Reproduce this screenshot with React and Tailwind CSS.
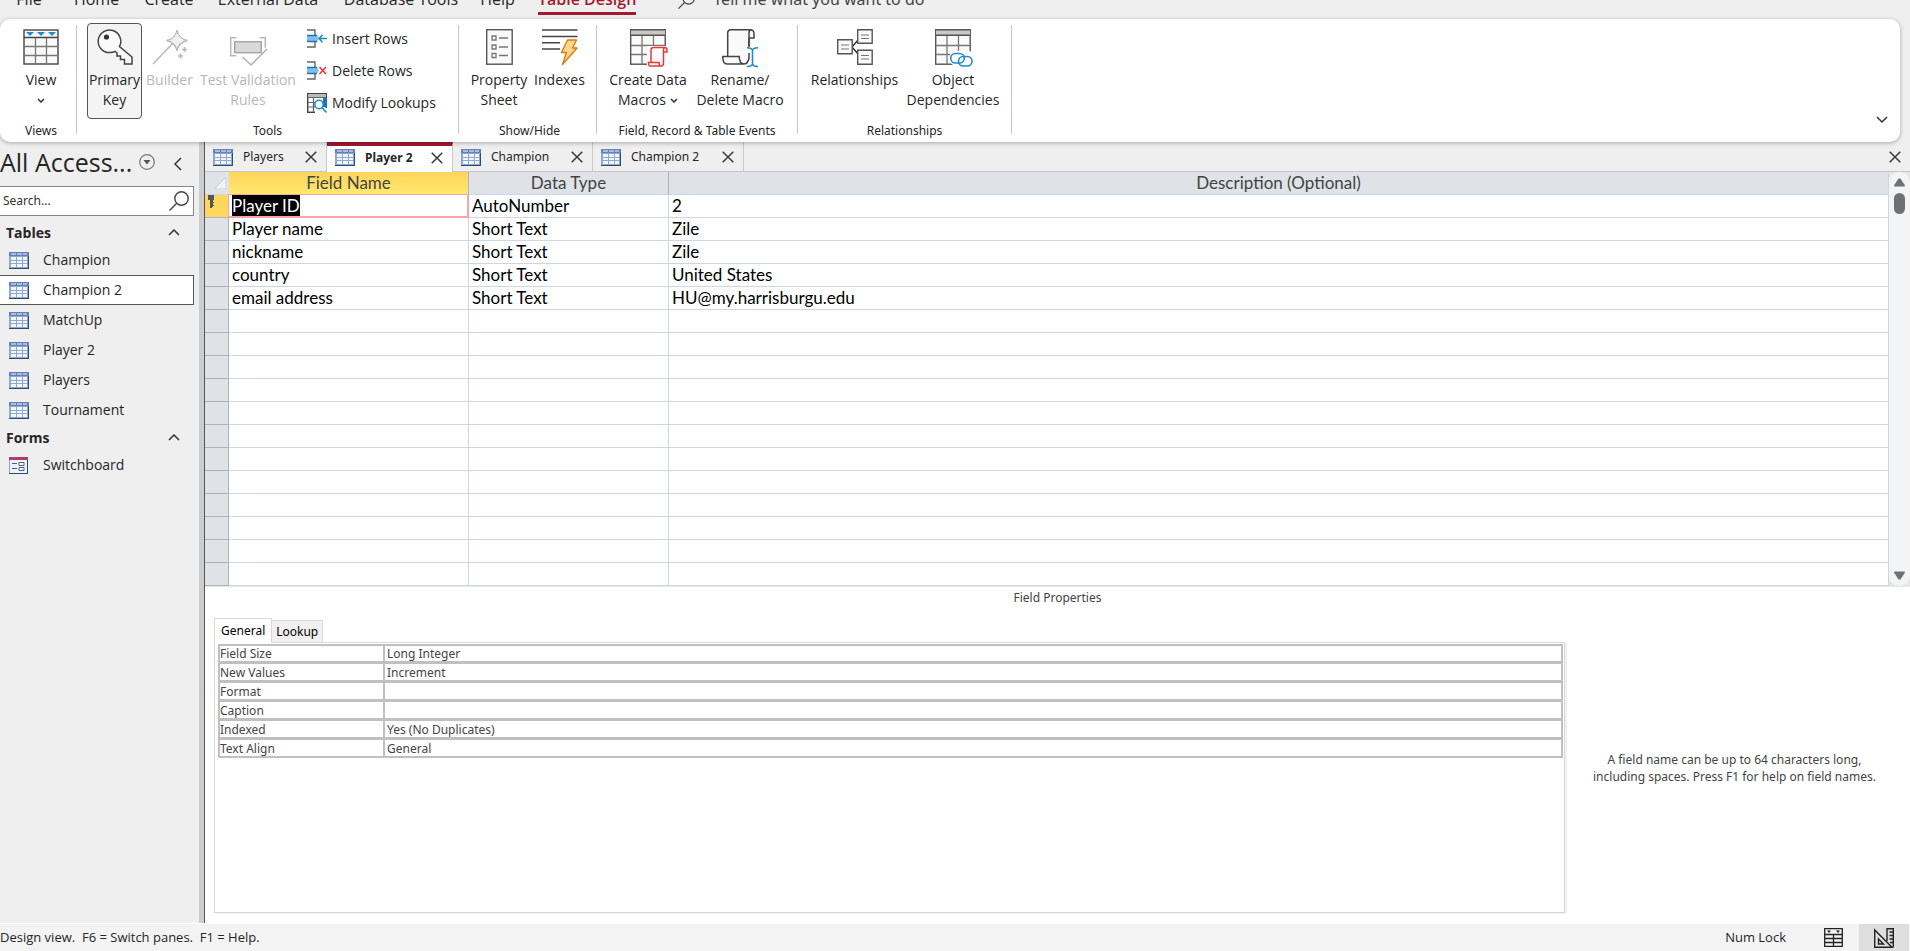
const menuItems = [
  { label: 'File', className: 'w-[58px]' },
  { label: 'Home', className: 'w-[77px]' },
  { label: 'Create', className: 'w-[68px]' },
  { label: 'External Data', className: 'w-[130px]' },
  { label: 'Database Tools', className: 'w-[136px]' },
  { label: 'Help', className: 'w-[57px]' },
]

const tables = ['Champion', 'Champion 2', 'MatchUp', 'Player 2', 'Players', 'Tournament']

const documentTabs = [
  { name: 'Players', className: 'w-[122px]' },
  { name: 'Player 2', className: 'w-[126px]' },
  { name: 'Champion', className: 'w-[140px]' },
  { name: 'Champion 2', className: 'w-[151px]' },
]

const fields = [
  ['Player ID', 'AutoNumber', '2'],
  ['Player name', 'Short Text', 'Zile'],
  ['nickname', 'Short Text', 'Zile'],
  ['country', 'Short Text', 'United States'],
  ['email address', 'Short Text', 'HU@my.harrisburgu.edu'],
]

const emptyRows = 12

const properties = [
  ['Field Size', 'Long Integer'],
  ['New Values', 'Increment'],
  ['Format', ''],
  ['Caption', ''],
  ['Indexed', 'Yes (No Duplicates)'],
  ['Text Align', 'General'],
]

function Svg({ size = 36, children }) {
  return (
    <svg width={size} height={size} viewBox={`0 0 ${size} ${size}`} fill="none" className="block shrink-0 overflow-visible" aria-hidden="true">
      {children}
    </svg>
  )
}

function ViewIcon() {
  return (
    <Svg>
      <rect x="1" y="1" width="34" height="34" fill="#fafafa" stroke="#444" strokeWidth="1.4" />
      <path d="M1 8.5h34" stroke="#444" strokeWidth="1.4" />
      <path d="M1 17.5h34M1 26.5h34M12.5 9v26M23.5 9v26" stroke="#777" strokeWidth="1.3" />
      <path d="M3 3h8L7 7zM14 3h8l-4 4zM25 3h8l-4 4z" fill="#1e8bcd" />
    </Svg>
  )
}

function KeyIcon() {
  return (
    <Svg>
      <path d="M22.5 17.5A11.3 11.3 0 1 0 13 23.6c2 0 3.7-.4 5.300-1.200l1.700 1.600v3h3.500v3.500h4v4.500h7.500v-7L22.500 17.500z" fill="#fafafa" stroke="#444" strokeWidth="1.500" />
      <circle cx="9.500" cy="8" r="2.600" fill="#333" />
    </Svg>
  )
}

function BuilderIcon() {
  return (
    <Svg>
      <path d="M1 35L21 14" stroke="#b8b8b8" strokeWidth="1.500" />
      <path d="M25 1q1.500 8.500 10.500 10.500Q26.500 13.500 25 22q-1.500-8.500-10.500-10.500Q23.500 9.500 25 1z" fill="#f0f0f0" stroke="#b8b8b8" strokeWidth="1.300" />
      <path d="M32.500 18v5M30 20.500h5M28.500 24.500v5M26 27h5" stroke="#b8b8b8" strokeWidth="1.600" />
    </Svg>
  )
}

function ValidationIcon() {
  return (
    <Svg>
      <path d="M6.500 8.700H.700v18H6.500M29.500 8.700h5.800v10" stroke="#b8b8b8" strokeWidth="1.500" />
      <rect x="4.700" y="12.700" width="26.500" height="11" fill="#d9d9d9" stroke="#a6a6a6" strokeWidth="1.500" />
      <path d="M12.500 28l8.500 8L37 20" stroke="#b0b0b0" strokeWidth="1.500" />
    </Svg>
  )
}

function RowsIcon({ remove }) {
  return (
    <Svg size={20}>
      <path d="M0 1h8v5M0 18h8v-5" stroke="#666" strokeWidth="1.400" />
      <path d="M0 6h10l2 3.500-2 3.500H0z" fill="#83bfec" />
      <path d="M0 6.500h10M0 12.500h10" stroke="#1e74b8" strokeWidth="1.500" />
      {remove ? (
        <path d="M12.500 6l6.500 7M19 6l-6.500 7" stroke="#e8383d" strokeWidth="1.600" />
      ) : (
        <path d="M20 9.500h-8M15.500 5.800L12 9.500l3.500 3.700" stroke="#1e8bcd" strokeWidth="1.500" />
      )}
    </Svg>
  )
}

function LookupIcon() {
  return (
    <Svg size={20}>
      <rect x=".7" y=".7" width="18.600" height="18.600" fill="#fafafa" stroke="#444" strokeWidth="1.400" />
      <path d="M1 1h18v3H1z" fill="#b9b9b9" />
      <path d="M1 4.500h18M1 9.500h8M1 14h7M6.500 5v14" stroke="#666" strokeWidth="1.200" />
      <path d="M16 5h4v9h-4z" fill="#1e74b8" />
      <path d="M8 15h12v5H8z" fill="#fff" />
      <circle cx="12" cy="11.500" r="4.200" fill="#fff" stroke="#1e8bcd" strokeWidth="1.600" />
      <path d="M15 14.500l4.500 5" stroke="#1e8bcd" strokeWidth="1.800" />
    </Svg>
  )
}

function PropertySheetIcon() {
  return (
    <Svg>
      <rect x="5.700" y=".7" width="25.500" height="34.500" fill="#fafafa" stroke="#555" strokeWidth="1.400" />
      <path d="M11 7h4v4h-4zM11 16h4v4h-4zM11 24.500h4v4h-4z" stroke="#777" strokeWidth="1.300" />
      <path d="M18 9h9M18 18h9M18 26.500h9" stroke="#777" strokeWidth="1.400" />
    </Svg>
  )
}

function IndexesIcon() {
  return (
    <Svg>
      <path d="M0 1h35.500M0 7.500h35.500M0 13.700h18M0 20h18" stroke="#444" strokeWidth="1.400" />
      <path d="M25.500 11h9l-4 8h4.500L20.500 35.500l4-12h-5z" fill="#fcd98c" stroke="#dd7a12" strokeWidth="1.400" strokeLinejoin="round" />
    </Svg>
  )
}

function GridBase() {
  return (
    <>
      <rect x=".7" y=".7" width="34.500" height="34.500" fill="#fafafa" stroke="#555" strokeWidth="1.400" />
      <path d="M1 1h34v5H1z" fill="#c8c8c4" />
      <path d="M1 6.300h34M.7.700h34.500" stroke="#555" strokeWidth="1.400" />
      <path d="M12 7v28M23.500 7v28M1 16.500h34M1 25.500h34" stroke="#777" strokeWidth="1.300" />
    </>
  )
}

function CreateMacroIcon() {
  return (
    <Svg>
      <GridBase />
      <path d="M17 17h22v21H17z" fill="#fff" />
      <path d="M21 33V21q0-2.500 2.500-2.500h11q2.500 0 2.500 2.500v2h-3.500v11q0 3-2.500 3H20q-1.500 0-1.500-3.500h10.500q0 3.500 2 3.500M33.500 23v-2.500q0-2 1.500-2" fill="#fafafa" stroke="#e8383d" strokeWidth="1.500" />
    </Svg>
  )
}

function RenameMacroIcon() {
  return (
    <Svg>
      <path d="M5.700 27V4q0-3.300 3.300-3.300h19q4 0 4 4V9h-5v19q0 7-5 7H5Q.700 35 .700 27.500h16.500Q17.500 35 22 35M27 9V4q0-3.300 2.500-3.300" fill="#fafafa" stroke="#444" strokeWidth="1.500" />
      <path d="M24 17h13v21H26z" fill="#fff" />
      <path d="M27 9v9M27 24v4q0 4-2.500 6" stroke="#444" strokeWidth="1.500" />
      <path d="M25 18.700q5.500 0 5.500 3 0-3 5.500-3M25 37.500q5.500 0 5.500-3 0 3 5.500 3M30.500 21v14" stroke="#1e8bcd" strokeWidth="1.600" />
    </Svg>
  )
}

function RelationshipsIcon() {
  return (
    <Svg>
      <path d="M15 18l6-7M15 18l6 7" stroke="#333" strokeWidth="1.500" />
      <path d="M.700 10.700h14.500v14H.700zM20.700.700h14.500v13.500H20.700zM20.700 21.200h14.500v14H20.700z" fill="#fafafa" stroke="#555" strokeWidth="1.400" />
      <path d="M4 16h8M4 20h8M24 6h8M24 9.500h8M24 26.500h8M24 30h8" stroke="#777" strokeWidth="1.200" />
    </Svg>
  )
}

function DependenciesIcon() {
  return (
    <Svg>
      <GridBase />
      <path d="M15 26q0-4 5-4h15q4 2 4 8v8H22q-7-2-7-8z" fill="#fff" />
      <rect x="15.700" y="24.500" width="13.500" height="9.500" rx="4.700" fill="#fff" stroke="#1e8bcd" strokeWidth="1.600" />
      <rect x="23.500" y="27.500" width="13.500" height="9.500" rx="4.700" stroke="#1e8bcd" strokeWidth="1.600" />
    </Svg>
  )
}

function TableIcon() {
  return (
    <svg width="20" height="17" viewBox="0 0 20 17" className="block shrink-0" aria-hidden="true">
      <path d="M0 0h20v17H0z" fill="#8fa8cc" />
      <path d="M0 0h20v4H0z" fill="#6480b8" />
      <path d="M2 1h5v2H2zM8 1h5v2H8zM14 1h4v2h-4z" fill="#a9bce0" />
      <path d="M2 5h5v3H2zM8 5h5v3H8zM14 5h4v3h-4zM2 9h5v2H2zM8 9h5v2H8zM14 9h4v2h-4zM2 12h5v3H2zM8 12h5v3H8zM14 12h4v3h-4z" fill="#f1f6fe" />
      <path d="M0 16h20v1H0zM19 4h1v13h-1z" fill="#2e4a70" />
    </svg>
  )
}

function FormIcon() {
  return (
    <svg width="20" height="17" viewBox="0 0 20 17" className="block shrink-0" aria-hidden="true">
      <path d="M.5.5h18v16H.5z" fill="#eef3fb" stroke="#8fa3c4" />
      <path d="M0 0h19v3H0z" fill="#b23c68" />
      <path d="M3 6.500h5M3 11.500h5" stroke="#4a5f86" />
      <path d="M10 5.500h5v3h-5zM10 10.500h5v3h-5z" fill="#fff" stroke="#4a5f86" />
      <path d="M0 16h19v1H0zM18 3h1v14h-1z" fill="#2e4a70" />
    </svg>
  )
}

function SearchIcon({ size }) {
  return (
    <svg width={size} height={size} viewBox="0 0 20 20" fill="none" stroke="#444" strokeWidth="1.4" className="block shrink-0" aria-hidden="true">
      <circle cx="12.500" cy="7.500" r="6.700" />
      <path d="M7.700 12.300L.5 19.500" />
    </svg>
  )
}

function Chevron({ d = 'M1 1l4 4 4-4', width = 10, height = 6 }) {
  return (
    <svg width={width} height={height} viewBox={`0 0 ${width} ${height}`} fill="none" stroke="#333" strokeWidth="1.5" className="inline-block shrink-0" aria-hidden="true">
      <path d={d} />
    </svg>
  )
}

function CloseButton({ label }) {
  return (
    <button type="button" aria-label={label} className="shrink-0">
      <svg width="12" height="12" viewBox="0 0 12 12" stroke="#333" strokeWidth="1.4" className="block">
        <path d="M.7.700l10.600 10.600M11.300.700L.7 11.300" />
      </svg>
    </button>
  )
}

function RibbonButton({ icon, lines, className, disabled }) {
  return (
    <button type="button" disabled={disabled} className={`flex h-24 flex-col items-center rounded pt-1.5 text-sm leading-5 whitespace-nowrap disabled:text-[#b8b8b8] ${className}`}>
      {icon}
      <span className="mt-[5px] flex flex-col items-center">
        {lines.map((line, i) => (
          <span key={i} className="flex h-5 items-center gap-1">{line}</span>
        ))}
      </span>
    </button>
  )
}

function RibbonGroup({ label, className, children }) {
  return (
    <>
      <section className={`flex flex-col justify-between pt-1 pb-[3px] ${className}`} aria-label={label}>
        <div className="flex">{children}</div>
        <h2 className="text-center font-['Noto_Sans',sans-serif] text-xs leading-4">{label}</h2>
      </section>
      <div className="mt-1.5 mb-2 w-px bg-[#c8c8c8]" />
    </>
  )
}

function Ribbon() {
  return (
    <div className="relative z-10 mr-2.5 flex h-[123px] rounded-[10px] bg-white shadow-[0_1px_4px_rgba(0,0,0,0.3)]">
      <RibbonGroup label="Views" className="pr-[5px] pl-[11px]">
        <RibbonButton className="w-[60px]" icon={<ViewIcon />} lines={['View', <Chevron key="c" d="M1 1l3 3 3-3" width={8} height={5} />]} />
      </RibbonGroup>
      <RibbonGroup label="Tools" className="px-2.5">
        <RibbonButton className="w-[55px] bg-[#f4f4f4] outline outline-1 -outline-offset-1 outline-[#555]" icon={<KeyIcon />} lines={['Primary', 'Key']} />
        <RibbonButton disabled className="w-[55px]" icon={<BuilderIcon />} lines={['Builder']} />
        <RibbonButton disabled className="w-[102px]" icon={<ValidationIcon />} lines={['Test Validation', 'Rules']} />
        <div className="flex w-[149px] flex-col pl-2 text-sm">
          <button type="button" className="flex h-8 items-center gap-[5px]"><RowsIcon />Insert Rows</button>
          <button type="button" className="flex h-8 items-center gap-[5px]"><RowsIcon remove />Delete Rows</button>
          <button type="button" className="flex h-8 items-center gap-[5px] whitespace-nowrap"><LookupIcon />Modify Lookups</button>
        </div>
      </RibbonGroup>
      <RibbonGroup label="Show/Hide" className="pr-1.5 pl-2.5">
        <RibbonButton className="w-[60px]" icon={<PropertySheetIcon />} lines={['Property', 'Sheet']} />
        <RibbonButton className="w-[61px]" icon={<IndexesIcon />} lines={['Indexes']} />
      </RibbonGroup>
      <RibbonGroup label="Field, Record & Table Events" className="px-2">
        <RibbonButton
          className="w-[86px]"
          icon={<CreateMacroIcon />}
          lines={['Create Data', <><span>Macros</span><Chevron d="M1 1l3 3 3-3" width={8} height={5} /></>]}
        />
        <RibbonButton className="w-[98px]" icon={<RenameMacroIcon />} lines={['Rename/', 'Delete Macro']} />
      </RibbonGroup>
      <RibbonGroup label="Relationships" className="px-2">
        <RibbonButton className="w-[97px]" icon={<RelationshipsIcon />} lines={['Relationships']} />
        <RibbonButton className="w-[100px]" icon={<DependenciesIcon />} lines={['Object', 'Dependencies']} />
      </RibbonGroup>
      <button type="button" aria-label="Collapse ribbon" className="mr-3 mb-3 ml-auto self-end">
        <Chevron d="M1 1l5 5 5-5" width={12} height={8} />
      </button>
    </div>
  )
}

function NavHeading({ children }) {
  return (
    <button type="button" className="flex h-[25px] w-full items-center justify-between pr-3.5 pl-1.5 text-sm font-bold">
      {children}
      <Chevron d="M1 6l5-5 5 5" width={12} height={8} />
    </button>
  )
}

function NavItem({ icon, name, selected }) {
  return (
    <li>
      <a href="#" className={`flex h-[30px] items-center gap-3.5 border border-l-0 pl-[9px] text-sm ${selected ? 'border-[#555] bg-white' : 'border-transparent'}`}>
        {icon}
        {name}
      </a>
    </li>
  )
}

function Sidebar() {
  return (
    <aside className="flex w-[199px] shrink-0 flex-col pr-[5px]">
      <div className="flex h-11 items-center pb-1">
        <h1 className="text-[25px] leading-8">All Access...</h1>
        <button type="button" aria-label="Filter objects" className="ml-auto">
          <svg width="16" height="16" viewBox="0 0 16 16" fill="none" className="block">
            <circle cx="8" cy="8" r="7.300" stroke="#777" strokeWidth="1.200" />
            <path d="M4.500 6h7L8 10.500z" fill="#555" />
          </svg>
        </button>
        <button type="button" aria-label="Close pane" className="mr-3 ml-[19px]">
          <Chevron d="M7 1L1 7l6 6" width={8} height={14} />
        </button>
      </div>
      <label className="flex h-[30px] items-center border border-l-0 border-[#888] bg-white pr-1 pl-[3px]">
        <input type="text" placeholder="Search..." aria-label="Search objects" className="min-w-0 flex-1 font-['Noto_Sans',sans-serif] text-xs outline-none placeholder:text-[#333]" />
        <SearchIcon size={20} />
      </label>
      <nav className="pt-1">
        <NavHeading>Tables</NavHeading>
        <ul>
          {tables.map((name) => (
            <NavItem key={name} name={name} icon={<TableIcon />} selected={name === 'Champion 2'} />
          ))}
        </ul>
        <NavHeading>Forms</NavHeading>
        <ul>
          <NavItem name="Switchboard" icon={<FormIcon />} />
        </ul>
      </nav>
    </aside>
  )
}

function DocumentTabs() {
  return (
    <div className="flex h-[30px] items-stretch border-b border-[#c8c8c8]">
      {documentTabs.map(({ name, className }) => {
        const active = name === 'Player 2'
        return (
          <div
            key={name}
            className={`flex items-center border-r border-[#c8c8c8] pr-[9px] pl-2 font-['Noto_Sans',sans-serif] text-xs ${className} ${active ? '-mb-px border-t-4 border-t-[#a4192d] bg-white pb-[3px] font-bold' : 'pt-px'}`}
          >
            <TableIcon />
            <button type="button" className="flex-1 pl-2.5 text-left whitespace-nowrap">{name}</button>
            <CloseButton label={`Close ${name}`} />
          </div>
        )
      })}
      <div className="ml-auto flex items-center pr-[9px]">
        <CloseButton label="Close all" />
      </div>
    </div>
  )
}

function RowSelector({ current }) {
  return (
    <td className={`border-r border-b border-[#aeb3b9] align-top ${current ? 'bg-[#ffd75f]' : 'bg-[#dfe2e7]'}`}>
      {current && (
        <svg width="8" height="14" viewBox="0 0 8 14" className="ml-0.5 block" aria-label="Primary key">
          <path d="M1 0h6v5H6v2h1v1H6v2h1v1H6v1H5v1H3V5H1z" fill="#555" />
        </svg>
      )}
    </td>
  )
}

function FieldGrid() {
  return (
    <div className="flex border-b border-[#e4e7ec] bg-white">
      <table className="flex-1 table-fixed border-separate border-spacing-0 font-[Lato,'Liberation_Sans',sans-serif] text-[17px] leading-[22px] text-black">
        <colgroup>
          <col className="w-6" />
          <col className="w-60" />
          <col className="w-[200px]" />
          <col />
        </colgroup>
        <thead>
          <tr className="h-[23px] bg-[#dfe2e7] text-[#444]">
            <th className="border-b border-[#cdd6e4] p-0" aria-label="Row">
              <svg width="12" height="12" viewBox="0 0 12 12" className="ml-auto mr-[3px] block" aria-hidden="true">
                <path d="M12 0v12H0z" fill="#eef3fa" stroke="#c3d0e4" />
              </svg>
            </th>
            <th className="border-r border-b border-r-[#aeb3b9] border-b-[#ffe87a] bg-linear-to-b from-[#ffd45a] to-[#ffe970] p-0 font-normal">Field Name</th>
            <th className="border-r border-b border-r-[#aeb3b9] border-b-[#cdd6e4] p-0 font-normal">Data Type</th>
            <th className="border-r border-b border-[#cdd6e4] p-0 font-normal">Description (Optional)</th>
          </tr>
        </thead>
        <tbody>
          {fields.map(([name, type, description], i) => (
            <tr key={name} className="h-[23px]">
              <RowSelector current={i === 0} />
              {i === 0 ? (
                <td className="relative border-r border-b border-[#cdd6e4] p-0 pl-[3px]">
                  <span className="pointer-events-none absolute -inset-px border border-r-2 border-b-2 border-[#f7a5aa]" />
                  <span className="inline-block bg-black text-white">{name}</span>
                </td>
              ) : (
                <td className="border-r border-b border-[#cdd6e4] p-0 pl-[3px]">{name}</td>
              )}
              <td className="border-r border-b border-[#cdd6e4] p-0 pl-[3px]">{type}</td>
              <td className="border-r border-b border-[#cdd6e4] p-0 pl-[3px]">{description}</td>
            </tr>
          ))}
          {Array.from({ length: emptyRows }, (_, i) => (
            <tr key={i} className="h-[23px]">
              <RowSelector />
              <td className="border-r border-b border-[#cdd6e4] p-0" />
              <td className="border-r border-b border-[#cdd6e4] p-0" />
              <td className="border-r border-b border-[#cdd6e4] p-0" />
            </tr>
          ))}
        </tbody>
      </table>
      <div className="bg-[#e6e6e6]">
        <div className="flex h-full w-[21px] flex-col items-center rounded-[10px] bg-[#f4f4f4] py-1.5">
          <svg width="11" height="9" viewBox="0 0 11 9" className="block" aria-hidden="true">
            <path d="M4.500.5h2l4.500 7-.5 1H.5l-.5-1z" fill="#707070" />
          </svg>
          <div className="mt-1.5 h-[21px] w-[11px] rounded-full bg-[#707070]" />
          <svg width="11" height="9" viewBox="0 0 11 9" className="mt-auto block" aria-hidden="true">
            <path d="M4.500 8.500h2l4.500-7-.5-1H.5l-.5 1z" fill="#707070" />
          </svg>
        </div>
      </div>
    </div>
  )
}

function FieldProperties() {
  return (
    <section className="flex flex-1 flex-col bg-white pb-2.5 font-['Noto_Sans',sans-serif] text-xs text-[#444]">
      <h2 className="h-[31px] pt-[3px] text-center leading-4">Field Properties</h2>
      <div className="flex flex-1 pl-[9px]">
        <div className="flex min-w-0 flex-1 flex-col">
          <div className="flex items-end leading-4 text-black" role="tablist">
            <button type="button" role="tab" aria-selected="true" className="relative z-10 -mb-px h-[25px] border border-b-0 border-[#d9d9d9] bg-white px-1.5">General</button>
            <button type="button" role="tab" aria-selected="false" className="h-[22px] border border-b-0 border-l-0 border-[#d9d9d9] bg-[#f0f0f0] px-1">Lookup</button>
          </div>
          <div className="flex-1 border border-[#d9d9d9] pt-px pr-px pl-[3px] shadow-[2px_1px_0_#f0f0f0]">
            <table className="w-full table-fixed border-separate border-spacing-0 border-2 border-b-0 border-[#c0c0c0]">
              <colgroup>
                <col className="w-[165px]" />
                <col />
              </colgroup>
              <tbody>
                {properties.map(([name, value]) => (
                  <tr key={name} className="group h-[19px] leading-[15px] first:h-[18px] last:h-[18px]">
                    <th scope="row" className="border-r-2 border-b-3 border-[#c0c0c0] p-0 text-left align-bottom font-normal group-last:border-b-2">
                      <label htmlFor={name} className="block">{name}</label>
                    </th>
                    <td className="border-b-3 border-[#c0c0c0] p-0 pl-0.5 align-bottom group-last:border-b-2">
                      <input id={name} type="text" defaultValue={value} className="block h-[15px] w-full outline-none" />
                    </td>
                  </tr>
                ))}
              </tbody>
            </table>
          </div>
        </div>
        <p className="flex w-[345px] shrink-0 items-center justify-center pt-1 pr-1.5 text-center leading-[17px]">
          <span>A field name can be up to 64 characters long,<br />including spaces. Press F1 for help on field names.</span>
        </p>
      </div>
    </section>
  )
}

function StatusBar() {
  return (
    <footer className="flex h-7 items-stretch border-t border-white bg-[#f3f3f3] pr-px text-[13px]">
      <span className="self-center whitespace-pre">Design view.  F6 = Switch panes.  F1 = Help.</span>
      <span className="mr-[38px] ml-auto self-center">Num Lock</span>
      <button type="button" aria-label="Datasheet view" className="mr-4 self-center">
        <svg width="19" height="19" viewBox="0 0 19 19" fill="none" stroke="#222" strokeWidth="1.300" className="block">
          <path d="M.7.700h17.600v17.600H.7zM.7 6.500h17.600M.7 10.500h17.600M.7 14.500h17.600M9.500 6.500v12" />
          <path d="M3 2.500h4l-2 2.500zM12 2.500h4l-2 2.500z" fill="#222" stroke="none" />
        </svg>
      </button>
      <button type="button" aria-label="Design view" className="flex w-[50px] items-center justify-center bg-[#dedede]">
        <svg width="20" height="20" viewBox="0 0 20 20" fill="none" stroke="#222" strokeWidth="1.400" className="block">
          <path d="M.7 2v17.300H18zM4.500 11v5h5z" />
          <path d="M13 13V.7h6.300v18.600M19 4h-3.500M19 7.500h-3.500M19 11h-3.500M19 14.500h-3" />
        </svg>
      </button>
    </footer>
  )
}

export default function App() {
  return (
    <div className="flex min-h-screen flex-col bg-[#efefef] font-['Open_Sans','Noto_Sans',sans-serif] text-[#262626]">
      <header className="flex h-[19px] items-end overflow-hidden pb-1 text-base leading-5">
        {menuItems.map(({ label, className }) => (
          <a key={label} href="#" className={`pb-[6px] text-center whitespace-nowrap ${className}`}>{label}</a>
        ))}
        <a href="#" className="ml-3 border-b-[3px] border-[#a4192d] pb-[3px] font-semibold whitespace-nowrap text-[#a4192d]">Table Design</a>
        <label className="ml-[42px] flex items-end gap-[18px]">
          <span className="pb-1.5"><SearchIcon size={17} /></span>
          <input type="text" placeholder="Tell me what you want to do" className="mb-1.5 h-5 w-64 font-['Noto_Sans',sans-serif] outline-none placeholder:text-[#444]" />
        </label>
      </header>
      <Ribbon />
      <div className="flex flex-1">
        <Sidebar />
        <div className="w-[5px] shrink-0 bg-[#cdcdcd]" />
        <main className="flex min-w-0 flex-1 flex-col border-l border-[#555]">
          <DocumentTabs />
          <FieldGrid />
          <FieldProperties />
        </main>
      </div>
      <StatusBar />
    </div>
  )
}
